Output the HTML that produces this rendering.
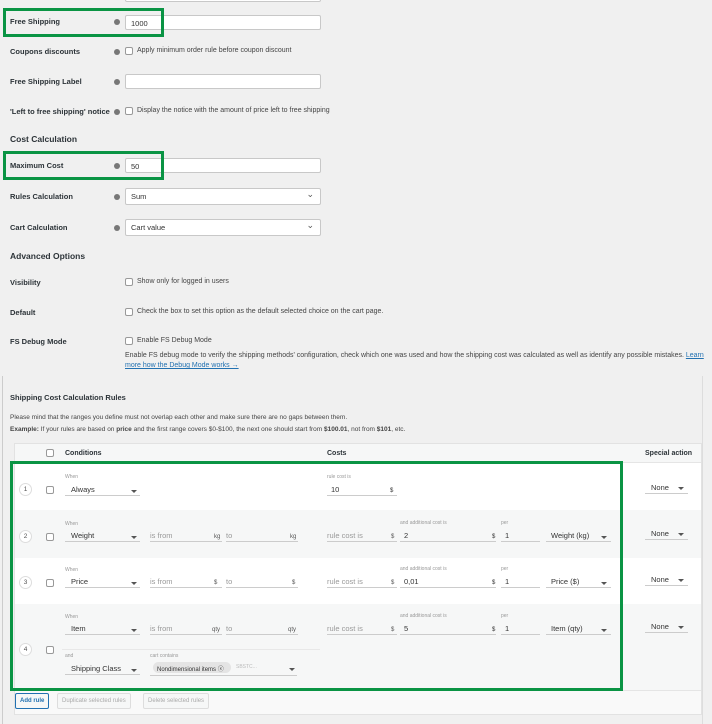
<!DOCTYPE html>
<html><head><meta charset="utf-8"><style>
*{box-sizing:border-box;margin:0;padding:0}
body{width:712px;height:724px;background:#f0f0f0;font-family:"Liberation Sans",sans-serif;color:#1d2327;position:relative;overflow:hidden}
.a{position:absolute;white-space:nowrap}
.lb{font-size:7.5px;font-weight:bold;color:#2c3338}
.h{font-size:8.5px;font-weight:bold;color:#2c3338}
.q{width:6px;height:6px;border-radius:50%;background:#777}
.in{background:#fff;border:1px solid #c8c8c8;border-radius:2px;height:15px;font-size:7.5px;padding:3px 5px;color:#333}
.cb{width:8px;height:8px;border:1px solid #999;border-radius:2px;background:#fff}
.t{font-size:7px;color:#444}
.g{border:3px solid #0a9444;position:absolute}
.sel::after{content:"⌄";position:absolute;right:6px;top:0px;font-size:9px;color:#555}
.sm{font-size:5px;color:#999}
.ul{border-bottom:1px solid #ccc;height:13px;font-size:7.5px;color:#333;padding-top:2px}
.ul span{top:5px}
.ph{color:#999}
.arr{width:0;height:0;border-left:3px solid transparent;border-right:3px solid transparent;border-top:3px solid #555;position:absolute}
.num{width:13px;height:13px;border:1px solid #ddd;border-radius:50%;background:#fff;font-size:6.5px;text-align:center;line-height:11px;color:#555}
.btn{font-size:6px;border:1px solid #ddd;border-radius:2px;padding:4px 4px;color:#aaa;background:#f6f7f7}
</style></head><body>
<div class="a in" style="left:125px;top:-10px;width:196px;height:12px"></div>

<div class="a lb" style="left:10px;top:17px">Free Shipping</div><div class="a q" style="left:114px;top:19px"></div>
<div class="a in" style="left:125px;top:15px;width:196px">1000</div>
<div class="g" style="left:3px;top:8px;width:161px;height:29px"></div>

<div class="a lb" style="left:10px;top:47px">Coupons discounts</div><div class="a q" style="left:114px;top:49px"></div>
<div class="a cb" style="left:125px;top:47px"></div><div class="a t" style="left:137px;top:47px">Apply minimum order rule before coupon discount</div>

<div class="a lb" style="left:10px;top:77px">Free Shipping Label</div><div class="a q" style="left:114px;top:79px"></div>
<div class="a in" style="left:125px;top:74px;width:196px"></div>

<div class="a lb" style="left:10px;top:107px">'Left to free shipping' notice</div><div class="a q" style="left:114px;top:109px"></div>
<div class="a cb" style="left:125px;top:107px"></div><div class="a t" style="left:137px;top:107px">Display the notice with the amount of price left to free shipping</div>

<div class="a h" style="left:10px;top:134px">Cost Calculation</div>
<div class="a lb" style="left:10px;top:161px">Maximum Cost</div><div class="a q" style="left:114px;top:163px"></div>
<div class="a in" style="left:125px;top:158px;width:196px">50</div>
<div class="g" style="left:3px;top:151px;width:161px;height:29px"></div>

<div class="a lb" style="left:10px;top:192px">Rules Calculation</div><div class="a q" style="left:114px;top:194px"></div>
<div class="a in sel" style="left:125px;top:188px;width:196px;height:17px">Sum</div>
<div class="a lb" style="left:10px;top:223px">Cart Calculation</div><div class="a q" style="left:114px;top:225px"></div>
<div class="a in sel" style="left:125px;top:219px;width:196px;height:17px">Cart value</div>

<div class="a h" style="left:10px;top:251px">Advanced Options</div>
<div class="a lb" style="left:10px;top:278px">Visibility</div>
<div class="a cb" style="left:125px;top:278px"></div><div class="a t" style="left:137px;top:278px">Show only for logged in users</div>
<div class="a lb" style="left:10px;top:308px">Default</div>
<div class="a cb" style="left:125px;top:308px"></div><div class="a t" style="left:137px;top:308px">Check the box to set this option as the default selected choice on the cart page.</div>
<div class="a lb" style="left:10px;top:337px">FS Debug Mode</div>
<div class="a cb" style="left:125px;top:337px"></div><div class="a t" style="left:137px;top:337px">Enable FS Debug Mode</div>
<div class="a t" style="left:125px;top:352px">Enable FS debug mode to verify the shipping methods' configuration, check which one was used and how the shipping cost was calculated as well as identify any possible mistakes. <span style="color:#2271b1;text-decoration:underline">Learn</span></div>
<div class="a t" style="left:125px;top:362px;color:#2271b1;text-decoration:underline">more how the Debug Mode works →</div>

<div class="a" style="left:2px;top:376px;width:701px;height:348px;border-left:1px solid #ccc;border-right:1px solid #ddd;background:#f0f0f0"></div>
<div class="a lb" style="left:10px;top:393px">Shipping Cost Calculation Rules</div>
<div class="a t" style="left:10px;top:414px;font-size:6.5px">Please mind that the ranges you define must not overlap each other and make sure there are no gaps between them.</div>
<div class="a t" style="left:10px;top:426px;font-size:6.5px"><b>Example:</b> If your rules are based on <b>price</b> and the first range covers $0-$100, the next one should start from <b>$100.01</b>, not from <b>$101</b>, etc.</div>

<div class="a" style="left:14px;top:443px;width:688px;height:272px;background:#fff;border:1px solid #e2e2e2"></div>
<div class="a" style="left:15px;top:444px;width:686px;height:19px;background:#f6f7f7;border-bottom:1px solid #e5e5e5"></div>
<div class="a cb" style="left:46px;top:449px"></div>
<div class="a lb" style="left:65px;top:450px;font-size:7px">Conditions</div>
<div class="a lb" style="left:327px;top:450px;font-size:7px">Costs</div>
<div class="a lb" style="left:645px;top:450px;font-size:7px">Special action</div>

<div class="a" style="left:15px;top:510px;width:686px;height:48px;background:#f6f7f7"></div>
<div class="a" style="left:15px;top:604px;width:686px;height:86px;background:#f6f7f7"></div>
<div class="a" style="left:15px;top:690px;width:686px;height:24px;background:#f9f9f9;border-top:1px solid #e5e5e5"></div>

<!-- row 1 -->
<div class="a num" style="left:19px;top:483px">1</div><div class="a cb" style="left:46px;top:486px"></div>
<div class="a sm" style="left:65px;top:474px">When</div>
<div class="a ul" style="left:65px;top:483px;width:75px;padding-left:6px">Always</div><div class="arr" style="left:131px;top:490px"></div>
<div class="a sm" style="left:327px;top:474px">rule cost is</div>
<div class="a ul" style="left:327px;top:483px;width:70px;padding-left:4px">10<span style="position:absolute;left:63px;font-size:6px">$</span></div>
<div class="a ul" style="left:645px;top:481px;width:43px;padding-left:6px">None</div><div class="arr" style="left:678px;top:487px"></div>

<!-- row 2 -->
<div class="a num" style="left:19px;top:530px">2</div><div class="a cb" style="left:46px;top:533px"></div>
<div class="a sm" style="left:65px;top:521px">When</div>
<div class="a ul" style="left:65px;top:529px;width:75px;padding-left:6px">Weight</div><div class="arr" style="left:131px;top:536px"></div>
<div class="a ul ph" style="left:150px;top:529px;width:72px">is from<span style="position:absolute;left:64px;font-size:6px;color:#555">kg</span></div>
<div class="a ul ph" style="left:226px;top:529px;width:72px">to<span style="position:absolute;left:64px;font-size:6px;color:#555">kg</span></div>
<div class="a ul ph" style="left:327px;top:529px;width:70px">rule cost is<span style="position:absolute;left:64px;font-size:6px;color:#555">$</span></div>
<div class="a sm" style="left:400px;top:520px">and additional cost is</div>
<div class="a ul" style="left:400px;top:529px;width:96px;padding-left:4px">2<span style="position:absolute;left:92px;font-size:6px">$</span></div>
<div class="a sm" style="left:501px;top:520px">per</div>
<div class="a ul" style="left:501px;top:529px;width:39px;padding-left:4px">1</div>
<div class="a ul" style="left:546px;top:529px;width:65px;padding-left:5px">Weight (kg)</div><div class="arr" style="left:601px;top:536px"></div>
<div class="a ul" style="left:645px;top:527px;width:43px;padding-left:6px">None</div><div class="arr" style="left:678px;top:533px"></div>

<!-- row 3 -->
<div class="a num" style="left:19px;top:576px">3</div><div class="a cb" style="left:46px;top:579px"></div>
<div class="a sm" style="left:65px;top:567px">When</div>
<div class="a ul" style="left:65px;top:575px;width:75px;padding-left:6px">Price</div><div class="arr" style="left:131px;top:582px"></div>
<div class="a ul ph" style="left:150px;top:575px;width:72px">is from<span style="position:absolute;left:64px;font-size:6px;color:#555">$</span></div>
<div class="a ul ph" style="left:226px;top:575px;width:72px">to<span style="position:absolute;left:66px;font-size:6px;color:#555">$</span></div>
<div class="a ul ph" style="left:327px;top:575px;width:70px">rule cost is<span style="position:absolute;left:64px;font-size:6px;color:#555">$</span></div>
<div class="a sm" style="left:400px;top:566px">and additional cost is</div>
<div class="a ul" style="left:400px;top:575px;width:96px;padding-left:4px">0,01<span style="position:absolute;left:92px;font-size:6px">$</span></div>
<div class="a sm" style="left:501px;top:566px">per</div>
<div class="a ul" style="left:501px;top:575px;width:39px;padding-left:4px">1</div>
<div class="a ul" style="left:546px;top:575px;width:65px;padding-left:5px">Price ($)</div><div class="arr" style="left:601px;top:582px"></div>
<div class="a ul" style="left:645px;top:573px;width:43px;padding-left:6px">None</div><div class="arr" style="left:678px;top:579px"></div>

<!-- row 4 -->
<div class="a num" style="left:19px;top:643px">4</div><div class="a cb" style="left:46px;top:646px"></div>
<div class="a sm" style="left:65px;top:614px">When</div>
<div class="a ul" style="left:65px;top:622px;width:75px;padding-left:6px">Item</div><div class="arr" style="left:131px;top:629px"></div>
<div class="a ul ph" style="left:150px;top:622px;width:72px">is from<span style="position:absolute;left:62px;font-size:6px;color:#555">qty</span></div>
<div class="a ul ph" style="left:226px;top:622px;width:72px">to<span style="position:absolute;left:62px;font-size:6px;color:#555">qty</span></div>
<div class="a ul ph" style="left:327px;top:622px;width:70px">rule cost is<span style="position:absolute;left:64px;font-size:6px;color:#555">$</span></div>
<div class="a sm" style="left:400px;top:613px">and additional cost is</div>
<div class="a ul" style="left:400px;top:622px;width:96px;padding-left:4px">5<span style="position:absolute;left:92px;font-size:6px">$</span></div>
<div class="a sm" style="left:501px;top:613px">per</div>
<div class="a ul" style="left:501px;top:622px;width:39px;padding-left:4px">1</div>
<div class="a ul" style="left:546px;top:622px;width:65px;padding-left:5px">Item (qty)</div><div class="arr" style="left:601px;top:629px"></div>
<div class="a ul" style="left:645px;top:620px;width:43px;padding-left:6px">None</div><div class="arr" style="left:678px;top:626px"></div>
<div class="a" style="left:62px;top:649px;width:258px;border-top:1px solid #e8e8e8"></div>
<div class="a sm" style="left:65px;top:653px">and</div>
<div class="a ul" style="left:65px;top:662px;width:75px;padding-left:6px">Shipping Class</div><div class="arr" style="left:131px;top:669px"></div>
<div class="a sm" style="left:150px;top:653px">cart contains</div>
<div class="a" style="left:150px;top:662px;width:147px;height:14px;border-bottom:1px solid #ccc"></div>
<div class="a" style="left:153px;top:662px;width:78px;height:11px;background:#e4e4e4;border-radius:6px;font-size:6px;padding:2px 4px;color:#333">Nondimensional items ⓧ</div>
<div class="a" style="left:236px;top:664px;font-size:5px;color:#bbb">SBSTC...</div>
<div class="arr" style="left:289px;top:668px"></div>

<div class="g" style="left:10px;top:461px;width:613px;height:230px"></div>

<div class="a btn" style="left:15px;top:693px;border-color:#2271b1;color:#2271b1;background:#f6f7f7;font-weight:bold">Add rule</div>
<div class="a btn" style="left:57px;top:693px">Duplicate selected rules</div>
<div class="a btn" style="left:143px;top:693px">Delete selected rules</div>
</body></html>
